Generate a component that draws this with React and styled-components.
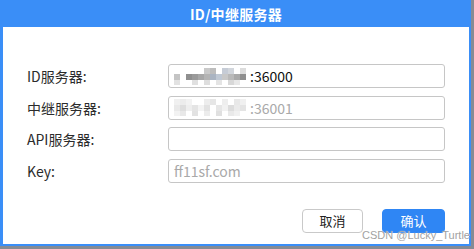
import React from 'react';
import styled, { createGlobalStyle } from 'styled-components';

const GlobalStyle = createGlobalStyle`
  html, body {
    margin: 0;
    padding: 0;
    background: #858b94;
  }
  body {
    font-family: "Noto Sans CJK SC", "Noto Sans", sans-serif;
  }
`;

const fields = [
  { label: 'ID服务器:', value: ':36000', mosaic: 'dark' },
  { label: '中继服务器:', value: ':36001', mosaic: 'light', muted: true },
  { label: 'API服务器:', value: '' },
  { label: 'Key:', value: 'ff11sf.com', muted: true },
];

const darkCells = [
  [0, 0, 0, 0, 0, '#c9c9c9', '#bdbdbd', 0, '#c6ccd6', '#d2d6dc', 0, '#dcdcdc', 0],
  ['#c4c4c4', 0, '#8f8f8f', '#9a9a9a', '#a7a7a7', '#b4b4b4', '#aab4c2', '#bfc8d4', '#c8c8c8', '#b9b9b9', '#a9a9a9', '#8e8e8e', 0],
  ['#e2e2e2', 0, 0, '#e0e0e0', 0, '#dedede', 0, '#e4e4e4', 0, '#d8d8d8', '#e8e8e8', 0, 0],
];

const lightCells = [
  ['#f0f0f0', '#ececec', '#f2f2f2', 0, 0, '#ededed', '#e6e6e6', 0, '#eeeeee', 0, '#e8e8e8', '#f0f0f0', 0],
  ['#e9e9e9', '#dedede', '#eeeeee', '#e4e4e4', '#f3f3f3', '#e2e2e2', 0, '#e6e6e6', '#f1f1f1', '#dcdcdc', '#eaeaea', '#e4e4e4', 0],
  ['#f2f2f2', '#e8e8e8', 0, '#e2e2e2', 0, '#ececec', 0, '#e0e0e0', 0, '#e9e9e9', '#f0f0f0', 0, 0],
];

const Mosaic = ({ variant }) => {
  const cells = variant === 'dark' ? darkCells : lightCells;
  return (
    <svg width="76" height="17" viewBox="0 0 76 17">
      {cells.map((row, r) =>
        row.map((c, i) =>
          c ? <rect key={`${r}-${i}`} x={i * 6} y={r * 6} width="6" height="6" fill={c} /> : null
        )
      )}
    </svg>
  );
};

const App = () => {
  return (
    <>
      <GlobalStyle />
      <Window>
        <TitleBar>ID/中继服务器</TitleBar>
        <Body>
          <Form>
            {fields.map((f) => (
              <Row key={f.label}>
                <Label>{f.label}</Label>
                <Input>
                  {f.mosaic && <Mosaic variant={f.mosaic} />}
                  <Value muted={f.muted}>{f.value}</Value>
                </Input>
              </Row>
            ))}
          </Form>
          <Actions>
            <Button>取消</Button>
            <Button primary>确认</Button>
          </Actions>
        </Body>
      </Window>
      <Watermark>CSDN @Lucky_Turtle</Watermark>
    </>
  );
};

export default App;

const Window = styled.div`
  width: 471px;
  height: 246px;
  box-sizing: border-box;
  background: #3a8ef7;
  padding: 0 2px 2px 3px;
  display: flex;
  flex-direction: column;
`;

const TitleBar = styled.div`
  height: 27px;
  flex-shrink: 0;
  display: flex;
  align-items: center;
  justify-content: center;
  color: #ffffff;
  font-size: 14px;
  font-weight: bold;
  letter-spacing: 0.3px;
`;

const Body = styled.div`
  flex: 1;
  background: #ffffff;
  padding: 37px 24px 0 24px;
  box-sizing: border-box;
`;

const Form = styled.div`
  display: flex;
  flex-direction: column;
  gap: 7.5px;
`;

const Row = styled.div`
  display: flex;
  align-items: center;
  height: 24px;
`;

const Label = styled.div`
  width: 141px;
  font-size: 14px;
  color: #2b2b2b;
`;

const Input = styled.div`
  width: 277px;
  height: 24px;
  box-sizing: border-box;
  border: 1px solid #c6c6c6;
  border-radius: 3px;
  display: flex;
  align-items: center;
  padding: 0 4px 0 5px;
  svg {
    flex-shrink: 0;
  }
`;

const Value = styled.span`
  font-size: 14px;
  color: ${(p) => (p.muted ? '#a9a9a9' : '#111111')};
`;

const Actions = styled.div`
  display: flex;
  justify-content: flex-end;
  gap: 19px;
  margin-top: 26px;
`;

const Button = styled.div`
  width: ${(p) => (p.primary ? '63px' : '61px')};
  height: 24px;
  box-sizing: border-box;
  border-radius: 4px;
  display: flex;
  align-items: center;
  justify-content: center;
  font-size: 13px;
  background: ${(p) => (p.primary ? '#2f86f4' : '#ffffff')};
  color: ${(p) => (p.primary ? '#ffffff' : '#222222')};
  border: 1px solid ${(p) => (p.primary ? '#2f86f4' : '#c9c9c9')};
`;

const Watermark = styled.div`
  position: absolute;
  left: 362px;
  top: 229px;
  font-family: "Liberation Sans", Arial, sans-serif;
  font-size: 11px;
  color: #a2a2a2;
  text-shadow: 0 0 1px #ffffff;
  white-space: nowrap;
`;
